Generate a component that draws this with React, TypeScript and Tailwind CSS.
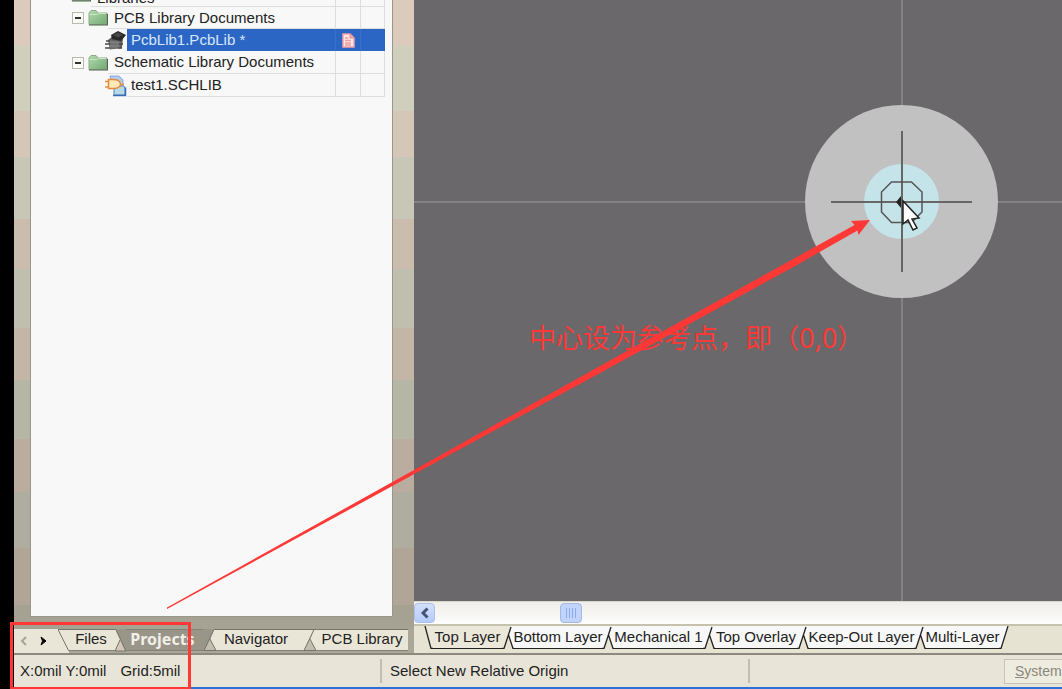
import React from "react";

function Expander() {
  return (
    <button aria-label="Collapse" className="flex size-3 shrink-0 items-center justify-center border border-[#bab8a9] bg-[#fbfbf8]">
      <span className="h-0.5 w-1.5 bg-[#333333]" />
    </button>
  );
}

function Folder() {
  return (
    <svg width="20" height="18" viewBox="0 0 20 18" className="shrink-0" aria-hidden="true">
      <defs>
        <linearGradient id="folder" x1="0" y1="0" x2="1" y2="1">
          <stop offset="0" stopColor="#b4dbae" />
          <stop offset="1" stopColor="#71a873" />
        </linearGradient>
      </defs>
      <path d="M1 15.500V4l2-2.500h5l2 2.500h9v11.500z" fill="url(#folder)" stroke="#8fa98a" />
      <path d="M1.500 5.500h7l2-1H18" fill="none" stroke="#c8e6c2" />
      <path d="M1 16h18.500V5" fill="none" stroke="#4f6650" strokeWidth="1.200" />
    </svg>
  );
}

function ChipIcon() {
  return (
    <svg width="22" height="21" viewBox="0 0 22 21" className="shrink-0" aria-hidden="true">
      <path d="M3 10l5-4 10 1-1 11-12 1.500z" fill="#5a5a5a" />
      <path d="M6 5l7-4 8 4-5 6-9-2z" fill="#282828" />
      <path d="M8 5l5-2.500 5 2.500-5 2.500z" fill="#484848" />
      <path d="M4 10l9 1 3 1-1 6-10 1z" fill="#707070" />
      <path d="M0 14h5M0 18h5M1 11h4M14 14h4M13 18h4" stroke="#4a4a4a" strokeWidth="1.500" />
      <path d="M5 12l9 1M5 16h9" stroke="#858585" />
    </svg>
  );
}

function SchematicIcon() {
  return (
    <svg width="22" height="22" viewBox="0 0 22 22" className="shrink-0" aria-hidden="true">
      <path d="M5 1h9l4 4v5H7z" fill="#b5caf0" stroke="#8aa5db" />
      <path d="M9 14l3-3h7l1 2v7H9z" fill="#b6d9e2" stroke="#5b83c4" />
      <path d="M8 20.500h12.500v-8" fill="none" stroke="#386cb8" strokeWidth="1.500" />
      <path d="M0 6.500h4M0 12h4M15 9.500h4" stroke="#e8913e" strokeWidth="1.500" />
      <path d="M3.500 4.500h6c4 0 6 3 6 5s-3 4-6 4h-6z" fill="#ffe9b8" stroke="#e58a36" strokeWidth="1.500" />
    </svg>
  );
}

function ModifiedIcon() {
  return (
    <svg width="13" height="15" viewBox="0 0 13 15" aria-label="Modified">
      <path d="M1 1h7l4 4v9H1z" fill="#fbe9e8" stroke="#f5a3a3" strokeWidth="1.500" />
      <path d="M8 1v4h4" fill="#f5a3a3" stroke="#f29090" />
      <path d="M3 5h3M3 7.500h6M3 10h6M3 12h6" stroke="#f29b9b" strokeWidth="1.300" />
    </svg>
  );
}

type RowProps = {
  label: string;
  rowClass: string;
  indentClass: string;
  icon: React.ReactNode;
  selected?: boolean;
  leaf?: boolean;
};

function TreeRow({ label, rowClass, indentClass, icon, selected, leaf }: RowProps) {
  return (
    <li role="treeitem" aria-selected={!!selected} className={`flex ${rowClass} ${indentClass}`}>
      <div className="flex items-center gap-1">
        {!leaf && <Expander />}
        {icon}
      </div>
      <div
        className={`grid min-w-0 flex-1 grid-cols-[1fr_25px_25px] ${
          selected ? "bg-[#2c66c4] text-[#d7e6ff]" : "border-b border-[#dddddd]"
        }`}
      >
        <span className={`flex items-center whitespace-nowrap ${leaf ? "pl-1" : "pl-1.5"}`}>{label}</span>
        <span className={`flex items-center justify-center border-l ${selected ? "border-[#3a70ca]" : "border-[#dddddd]"}`}>
          {selected && <ModifiedIcon />}
        </span>
        <span className={`border-x ${selected ? "border-[#2c66c4] border-l-[#3a70ca]" : "border-[#dddddd]"}`} />
      </div>
    </li>
  );
}

function ProjectTree() {
  return (
    <ul role="tree" aria-label="Projects" className="-mt-3 pr-[7px]">
      <TreeRow label="Libraries" rowClass="h-[19px] [&>div:first-child]:pb-2" indentClass="pl-6" icon={<Folder />} />
      <TreeRow label="PCB Library Documents" rowClass="h-[22px]" indentClass="pl-[41px]" icon={<Folder />} />
      <TreeRow label="PcbLib1.PcbLib *" rowClass="h-[22px]" indentClass="pl-[74px]" icon={<ChipIcon />} selected leaf />
      <TreeRow label="Schematic Library Documents" rowClass="h-[23px]" indentClass="pl-[41px]" icon={<Folder />} />
      <TreeRow label="test1.SCHLIB" rowClass="h-[23px]" indentClass="pl-[74px]" icon={<SchematicIcon />} leaf />
    </ul>
  );
}

function PanelTab({ label, widthClass }: { label: string; widthClass: string }) {
  return (
    <button className={`h-[22px] shrink-0 border-y border-t-[#77756a] border-b-[#858377] bg-[#e9e6d8] pb-0.5 leading-[18px] whitespace-nowrap ${widthClass}`}>
      {label}
    </button>
  );
}

function PanelTabs() {
  return (
    <nav aria-label="Panels" className="flex h-[26px] border-b-2 border-[#8d897e] bg-[#aaa799]">
      <div className="flex w-11 shrink-0 items-center gap-3 bg-[#e9e6d8] pl-1.5">
        <button aria-label="Previous panels">
          <svg width="8" height="10" viewBox="0 0 8 10"><path d="M6 1L2 5l4 4" fill="none" stroke="#a5a399" strokeWidth="2" /></svg>
        </button>
        <button aria-label="Next panels">
          <svg width="8" height="10" viewBox="0 0 8 10"><path d="M1 1l5 4-5 4 1.500-4z" fill="#000" stroke="#000" /></svg>
        </button>
      </div>
      <svg width="11" height="24" viewBox="0 0 11 24" className="shrink-0">
        <path d="M0 0h11v24H0z" fill="#e9e6d8" />
        <path d="M0 .5h11M0 .5l10.500 21H11" fill="none" stroke="#77756a" />
      </svg>
      <PanelTab label="Files" widthClass="w-[46px] pr-0.5" />
      <svg width="11" height="24" viewBox="0 0 11 24" className="shrink-0">
        <path d="M0 0l5 11-5 11z" fill="#e9e6d8" />
        <path d="M1 0h10v22z" fill="#999589" />
        <path d="M5 11l5 11H0z" fill="#d3c8b9" />
        <path d="M0 .5h1l10 21.500H0l5-11" fill="none" stroke="#77756a" />
      </svg>
      <button aria-pressed="true" className="h-[22px] w-[77px] shrink-0 border-y border-[#858175] bg-[#999589] pr-1 pb-0.5 font-['Noto_Sans',sans-serif] text-base leading-[18px] font-bold text-[#f2efe8]">
        Projects
      </button>
      <svg width="13" height="24" viewBox="0 0 13 24" className="shrink-0">
        <path d="M0 0h11L1 22H0z" fill="#999589" />
        <path d="M11 0h2v22L7 11z" fill="#e9e6d8" />
        <path d="M7 10l6 12H1z" fill="#c2bdb0" />
        <path d="M13 .5h-2L1 21.500h12L7 10" fill="none" stroke="#77756a" />
      </svg>
      <PanelTab label="Navigator" widthClass="w-[88px] pr-2" />
      <svg width="12" height="24" viewBox="0 0 12 24" className="shrink-0">
        <path d="M0 0v22L10 0z" fill="#e9e6d8" />
        <path d="M10 0h2v22L6 11z" fill="#e9e6d8" />
        <path d="M6 10l6 12H0z" fill="#c2bdb0" />
        <path d="M0 .5h12M10 .5L0 21.500h12L6 10" fill="none" stroke="#77756a" />
      </svg>
      <PanelTab label="PCB Library" widthClass="w-[92px]" />
    </nav>
  );
}

function LayerTab({ label, widthClass, active }: { label: string; widthClass: string; active?: boolean }) {
  return (
    <button
      aria-pressed={!!active}
      className={`relative flex h-[23px] shrink-0 items-center justify-center border-b border-[#222222] whitespace-nowrap ${widthClass} ${active ? "bg-[#ebe8da]" : "bg-[#f8f8f8]"}`}
    >
      {label}
    </button>
  );
}

function LayerEdge({ leftFill = "#f8f8f8" }: { leftFill?: string }) {
  return (
    <svg width="12" height="23" viewBox="0 0 12 23" className="shrink-0" aria-hidden="true">
      <path d="M0 0h9L1 23H0z" fill={leftFill} />
      <path d="M9 0h3v23l-5-14z" fill="#f8f8f8" />
      <path d="M9 1L2 22.500H0M6.500 9l4.500 13.500h1" fill="none" stroke="#222222" strokeWidth="1.300" />
    </svg>
  );
}

function LayerTabs() {
  return (
    <nav aria-label="Layers" className="flex h-[31px] overflow-hidden border-t-2 border-b-2 border-t-[#c5c2ae] border-b-[#8d897e] bg-[#e6e3d3] pl-2.5">
      <svg width="9" height="23" viewBox="0 0 9 23" className="shrink-0">
        <path d="M1 0h8v23l-2-1z" fill="#ebe8da" />
        <path d="M1 0l6 22.500h2" fill="none" stroke="#222222" strokeWidth="1.300" />
      </svg>
      <LayerTab label="Top Layer" widthClass="w-[69px]" active />
      <LayerEdge leftFill="#ebe8da" />
      <LayerTab label="Bottom Layer" widthClass="w-[88px]" />
      <LayerEdge />
      <LayerTab label="Mechanical 1" widthClass="w-[89px]" />
      <LayerEdge />
      <LayerTab label="Top Overlay" widthClass="w-[82px]" />
      <LayerEdge />
      <LayerTab label="Keep-Out Layer" widthClass="w-[105px]" />
      <LayerEdge />
      <LayerTab label="Multi-Layer" widthClass="w-[73px]" />
      <svg width="10" height="23" viewBox="0 0 10 23" className="shrink-0">
        <path d="M0 0h9L2 23H0z" fill="#f8f8f8" />
        <path d="M9 0L2 22.500H0" fill="none" stroke="#222222" strokeWidth="1.300" />
      </svg>
    </nav>
  );
}

function ScrollBar() {
  return (
    <div className="flex h-[23px] items-center border-t border-[#d9d6cb] bg-linear-to-b from-[#f0eee9] to-[#fdfdfd]">
      <button aria-label="Scroll left" className="flex h-5 w-[21px] items-center justify-center rounded-sm border border-[#aebfe8] bg-linear-to-b from-[#d3e0fd] to-[#b5cbfa]">
        <svg width="8" height="12" viewBox="0 0 8 12"><path d="M6.500 1.500L2 6l4.500 4.500" fill="none" stroke="#43546f" strokeWidth="3" /></svg>
      </button>
      <div className="ml-[125px] flex h-5 w-[22px] items-center justify-center gap-0.5 rounded-sm border border-[#a5b9e6] bg-[#c1d4fc]">
        <span className="h-2.5 w-px bg-[#8daceb]" />
        <span className="h-2.5 w-px bg-[#8daceb]" />
        <span className="h-2.5 w-px bg-[#8daceb]" />
        <span className="h-2.5 w-px bg-[#8daceb]" />
      </div>
    </div>
  );
}

function PcbCanvas() {
  return (
    <main className="relative min-h-0 flex-1 overflow-hidden bg-[#6a686a]">
      <div className="absolute inset-x-0 top-[201px] h-0.5 bg-[#838183]" />
      <div className="absolute inset-y-0 left-[487px] w-0.5 bg-[#838183]" />
      <svg width="194" height="194" viewBox="0 0 194 194" className="absolute top-[105px] left-[391px]" aria-label="Pad">
        <circle cx="96.500" cy="96.500" r="96.500" fill="#c1c1c1" />
        <circle cx="96.500" cy="96.500" r="37.500" fill="#c5e4e9" />
        <path d="M97 26v141M26 97h141" stroke="#666666" strokeWidth="2" />
        <path d="M86.500 77h20l10.500 10v20l-10.500 10.500h-20L76.500 107V87z" fill="none" stroke="#555555" strokeWidth="1.500" />
        <path d="M91 97l5-6v12z" fill="#222222" />
        <path d="M98 96v23l5-4 5 10 4-2-5-9 7-1z" fill="#ffffff" stroke="#222222" strokeWidth="1.500" />
      </svg>
    </main>
  );
}

function StatusBar() {
  return (
    <footer className="shrink-0">
      <div className="flex h-8 items-center overflow-hidden bg-[#e8e5d8] whitespace-nowrap">
        <div className="flex h-6 w-[368px] shrink-0 items-center gap-3.5 border-r-2 border-[#c2bfb1] pl-1.5">
          <span>X:0mil Y:0mil</span>
          <span>Grid:5mil</span>
        </div>
        <div className="flex h-6 w-[368px] shrink-0 items-center border-r-2 border-[#c2bfb1] pl-2">Select New Relative Origin</div>
        <div className="flex flex-1 justify-end">
          <button className="h-[25px] w-[58px] border border-r-0 border-[#c8c4b5] bg-[#eeebdf] pl-2.5 text-left text-sm text-[#8a887c]">
            <u>S</u>ystem
          </button>
        </div>
      </div>
      <div className="flex h-0.5">
        <div className="w-[131px] bg-[#4a9150]" />
        <div className="flex-1 bg-[#2d70d7]" />
      </div>
    </footer>
  );
}

export default function App() {
  return (
    <div className="relative flex h-screen flex-col overflow-hidden bg-black pl-3.5 font-['Liberation_Sans',sans-serif] text-[15px] leading-5 text-[#222222]">
      <div className="flex min-h-0 flex-1">
        <aside className="flex w-[400px] shrink-0 flex-col bg-[#a5a294]">
          <div className="flex min-h-0 flex-1 flex-col bg-[linear-gradient(#dccbbd_0_46px,#d0cfbe_46px_111px,#d4c7b8_111px_157px,#c8c6b6_157px_219px,#cabdae_219px_269px,#bfbeaf_269px_328px,#c3b6a7_328px_380px,#b6b6a7_380px_439px,#baad9f_439px_492px,#aead9f_492px_548px,#b1a597_548px_605px,#a5a294_605px)] pr-[21px] pb-3 pl-4">
            <div className="min-h-0 flex-1 overflow-hidden border-x border-b border-[#99968b] bg-[#f8f8f8]">
              <ProjectTree />
            </div>
          </div>
          <PanelTabs />
        </aside>
        <div className="flex min-w-0 flex-1 flex-col">
          <PcbCanvas />
          <ScrollBar />
          <LayerTabs />
        </div>
      </div>
      <StatusBar />

      <p className="absolute top-[320px] left-[529px] font-['Noto_Sans','Noto_Sans_CJK_SC',sans-serif] text-[27px] leading-9 whitespace-nowrap text-[#ff3836]">
        中心设为参考点，即（0,0）
      </p>
      <svg width="704" height="390" viewBox="0 0 704 390" className="pointer-events-none absolute top-[219px] left-[167px]" aria-hidden="true">
        <path d="M0 388.500L273 236.500 433 147 628 39 687.500 6l-3.500-4 19-1-11.500 15-1-4.500L628 47 433 154 273 241 0 390z" fill="#ff3836" />
      </svg>
      <div className="pointer-events-none absolute bottom-0 left-2.5 h-[67px] w-[181px] border-3 border-b-2 border-[#ff3836]" />
    </div>
  );
}
